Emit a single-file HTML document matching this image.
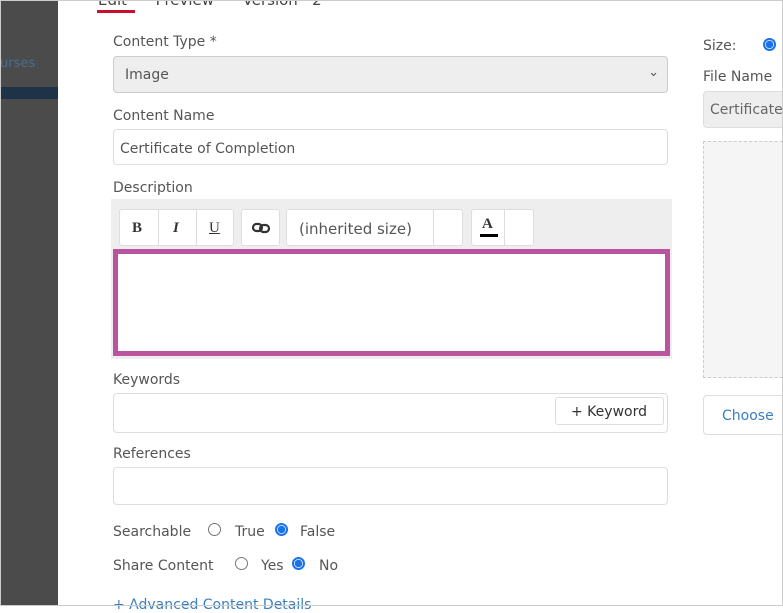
<!DOCTYPE html>
<html><head><style>
*{box-sizing:border-box;margin:0;padding:0}
body{width:783px;height:606px;overflow:hidden;background:#fff;font-family:"DejaVu Sans","Liberation Sans",sans-serif;color:#555;position:relative;font-size:14px}
.a{position:absolute}
.lbl{font-size:14px;color:#555}
.inp{border:1px solid #ddd;border-radius:4px;background:#fff}
.radio{width:13px;height:13px;border:1px solid #777;border-radius:50%;display:inline-block}
.radio.on{border:2px solid #1a73e8;background:radial-gradient(circle,#1a73e8 0 3.5px,#fff 4px)}
</style></head><body>
<div class="a" style="left:0;top:0;width:783px;height:606px;border:1px solid #ccc;z-index:5;pointer-events:none"></div>
<div class="a" style="left:0;top:0;width:58px;height:606px;background:#4b4b4b"></div>
<div class="a" style="left:0;top:56px;color:#4a6d8c;font-size:13px">urses</div>
<div class="a" style="left:0;top:87px;width:58px;height:12px;background:#1f3348"></div>
<div class="a" style="left:98px;top:-9px;font-size:15px;color:#444">Edit&nbsp;&nbsp;&nbsp;&nbsp;&nbsp;&nbsp;Preview&nbsp;&nbsp;&nbsp;&nbsp;&nbsp;&nbsp;Version&nbsp;&nbsp;&nbsp;2</div>
<div class="a" style="left:97px;top:10px;width:38px;height:3px;background:#c8102e"></div>

<div class="a lbl" style="left:113px;top:34px">Content Type *</div>
<div class="a" style="left:113px;top:56px;width:555px;height:37px;background:#eee;border:1px solid #ccc;border-radius:4px;padding:10px 11px">Image<span style="position:absolute;right:8px;top:8px;font-size:13px">&#8964;</span></div>
<div class="a lbl" style="left:113px;top:108px">Content Name</div>
<div class="a inp" style="left:113px;top:129px;width:555px;height:36px;padding:11px 6px;font-size:14px">Certificate of Completion</div>
<div class="a lbl" style="left:113px;top:180px">Description</div>
<div class="a" style="left:111px;top:199px;width:561px;height:160px;background:#eee"></div>
<div class="a" style="left:119px;top:209px;width:115px;height:37px;background:#fff;border:1px solid #ddd;border-radius:3px;font-family:'Liberation Serif',serif;font-size:15px;color:#333">
<span class="a" style="left:12px;top:10px;font-weight:bold">B</span>
<span class="a" style="left:38px;top:0;width:1px;height:35px;background:#ddd"></span>
<span class="a" style="left:53px;top:10px;font-style:italic;font-weight:bold">I</span>
<span class="a" style="left:76px;top:0;width:1px;height:35px;background:#ddd"></span>
<span class="a" style="left:89px;top:10px;text-decoration:underline">U</span></div>
<div class="a" style="left:241px;top:209px;width:39px;height:37px;background:#fff;border:1px solid #ddd;border-radius:3px">
<svg class="a" style="left:9px;top:12px" width="20" height="12" viewBox="0 0 20 12"><rect x="2" y="2" width="9" height="7" rx="3.5" fill="none" stroke="#333" stroke-width="2.2"/><rect x="9" y="3" width="9" height="7" rx="3.5" fill="none" stroke="#333" stroke-width="2.2"/></svg></div>
<div class="a" style="left:286px;top:209px;width:177px;height:37px;background:#fff;border:1px solid #ddd;border-radius:3px;padding:10px 12px;font-size:15px">(inherited size)<span class="a" style="left:146px;top:0;width:1px;height:35px;background:#ddd"></span></div>
<div class="a" style="left:471px;top:209px;width:63px;height:37px;background:#fff;border:1px solid #ddd;border-radius:3px">
<span class="a" style="left:10px;top:6px;font-family:'Liberation Serif',serif;font-weight:bold;color:#333;font-size:15px">A</span>
<span class="a" style="left:8px;top:24px;width:18px;height:3px;background:#000"></span>
<span class="a" style="left:32px;top:0;width:1px;height:35px;background:#ddd"></span></div>
<div class="a" style="left:113px;top:249px;width:557px;height:107px;border:5px solid #bb549f;background:#fff"></div>

<div class="a lbl" style="left:113px;top:372px">Keywords</div>
<div class="a inp" style="left:113px;top:393px;width:555px;height:40px"></div>
<div class="a" style="left:555px;top:397px;width:109px;height:28px;border:1px solid #ddd;border-radius:3px;background:#fff;color:#333;padding:6px 0 0 15px;font-size:14px">+ Keyword</div>
<div class="a lbl" style="left:113px;top:446px">References</div>
<div class="a inp" style="left:113px;top:467px;width:555px;height:38px"></div>
<div class="a lbl" style="left:113px;top:524px">Searchable</div>
<span class="a radio" style="left:208px;top:523px"></span>
<div class="a lbl" style="left:235px;top:524px">True</div>
<span class="a radio on" style="left:275px;top:523px"></span>
<div class="a lbl" style="left:300px;top:524px">False</div>
<div class="a lbl" style="left:113px;top:558px">Share Content</div>
<span class="a radio" style="left:235px;top:557px"></span>
<div class="a lbl" style="left:261px;top:558px">Yes</div>
<span class="a radio on" style="left:292px;top:557px"></span>
<div class="a lbl" style="left:319px;top:558px">No</div>
<div class="a" style="left:113px;top:597px;color:#3a7ec0;font-size:14px">+ Advanced Content Details</div>

<div class="a lbl" style="left:703px;top:38px">Size:</div>
<span class="a radio on" style="left:763px;top:38px"></span>
<div class="a lbl" style="left:703px;top:69px">File Name</div>
<div class="a" style="left:703px;top:91px;width:90px;height:37px;background:#eee;border:1px solid #ddd;border-radius:4px;padding:10px 6px;color:#666">Certificate</div>
<div class="a" style="left:703px;top:141px;width:90px;height:237px;border:1px dashed #ccc;background:#f5f5f5"></div>
<div class="a" style="left:703px;top:395px;width:90px;height:40px;border:1px solid #ddd;border-radius:4px;padding:12px 18px;color:#3a7ec0">Choose</div>
</body></html>
